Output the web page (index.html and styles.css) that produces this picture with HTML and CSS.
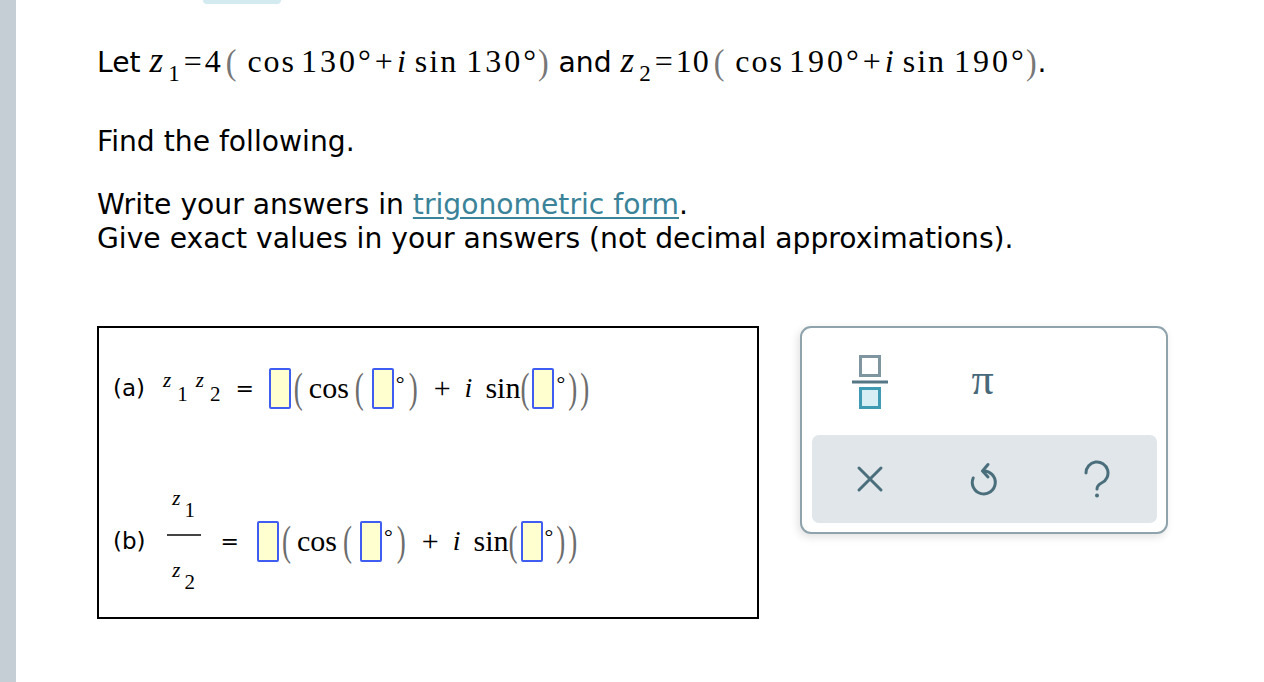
FILE: index.html
```html
<!DOCTYPE html>
<html lang="en">
<head>
<meta charset="utf-8">
<title>Complex numbers in trigonometric form</title>
<link rel="stylesheet" href="styles.css">
</head>
<body>
<div class="page">
  <aside class="rail"></aside>
  <main class="content">
    <div class="tab"></div>
    <p class="intro">Let <span class="m"><span class="mi mi-z">z</span><span class="sub">1</span><span class="mo">=</span><span class="dg dg-s">4</span><span class="gp">(</span><span class="fn">cos</span><span class="dg">130</span><span class="dgo">°</span><span class="pl">+</span><span class="mi mi-i">i</span><span class="fn sn">sin</span><span class="dg dg-t">130</span><span class="dgo">°</span><span class="gp gc">)</span></span> and <span class="m"><span class="mi mi-z">z</span><span class="sub">2</span><span class="mo">=</span><span class="dg dg-s">10</span><span class="gp">(</span><span class="fn">cos</span><span class="dg">190</span><span class="dgo">°</span><span class="pl">+</span><span class="mi mi-i">i</span><span class="fn sn">sin</span><span class="dg dg-t">190</span><span class="dgo">°</span><span class="gp gc">)</span></span>.</p>
    <p class="find">Find the following.</p>
    <p class="instr">Write your answers in <a href="#" class="link">trigonometric form</a>.<br>Give exact values in your answers (not decimal approximations).</p>

    <section class="work">
      <div class="answers">
        <div class="row row-a">
          <span class="label">(a)</span>
          <span class="prod"><span class="zv">z</span><span class="zs">1</span><span class="zv">z</span><span class="zs">2</span></span>
          <span class="eq">=</span>
          <span class="blank"></span>
          <span class="bp bp-outer">(</span>
          <span class="rf rf-cos">cos</span>
          <span class="bp bp-cos">(</span><span class="blank blank-in"></span><span class="deg">°</span><span class="bp bp-close">)</span>
          <span class="plus">+</span>
          <span class="ri">i</span>
          <span class="rf rf-sin">sin</span>
          <span class="bp">(</span><span class="blank blank-sin"></span><span class="deg">°</span><span class="bp bp-c2">)</span><span class="bp bp-c3">)</span>
        </div>
        <div class="row row-b">
          <span class="label">(b)</span>
          <span class="frac">
            <span class="num"><span class="zv">z</span><span class="zs">1</span></span>
            <span class="bar"></span>
            <span class="den"><span class="zv">z</span><span class="zs">2</span></span>
          </span>
          <span class="eq">=</span>
          <span class="blank"></span>
          <span class="bp bp-outer">(</span>
          <span class="rf rf-cos">cos</span>
          <span class="bp bp-cos">(</span><span class="blank blank-in"></span><span class="deg">°</span><span class="bp bp-close">)</span>
          <span class="plus">+</span>
          <span class="ri">i</span>
          <span class="rf rf-sin">sin</span>
          <span class="bp">(</span><span class="blank blank-sin"></span><span class="deg">°</span><span class="bp bp-c2">)</span><span class="bp bp-c3">)</span>
        </div>
      </div>

      <div class="palette">
        <div class="tools">
          <button class="key" type="button" aria-label="fraction">
            <svg width="36" height="54" viewBox="0 0 36 54">
              <rect x="8.5" y="1.5" width="19" height="19" fill="#fff" stroke="#7f959f" stroke-width="3"/>
              <line x1="0" y1="27" x2="36" y2="27" stroke="#557785" stroke-width="3"/>
              <rect x="8.5" y="33.5" width="19" height="19" fill="#d6eef4" stroke="#3f9ab3" stroke-width="3"/>
            </svg>
          </button>
          <button class="key pi" type="button">π</button>
          <span class="key"></span>
        </div>
        <div class="actions">
          <button class="key" type="button" aria-label="clear">
            <svg width="28" height="28" viewBox="0 0 28 28"><path d="M3 3 L25 25 M25 3 L3 25" stroke="#4a6e7b" stroke-width="3" stroke-linecap="round" fill="none"/></svg>
          </button>
          <button class="key" type="button" aria-label="undo">
            <svg width="32" height="36" viewBox="0 0 32 36"><path d="M14 10 A11.5 11.5 0 1 1 4.2 17" stroke="#4a6e7b" stroke-width="3" stroke-linecap="round" fill="none"/><path d="M19 3.5 L13.5 10 L19 16" stroke="#4a6e7b" stroke-width="3" stroke-linecap="round" stroke-linejoin="round" fill="none"/></svg>
          </button>
          <button class="key key-help" type="button" aria-label="help">
            <svg width="30" height="38" viewBox="0 0 30 38"><path d="M4 13 A11 11 0 1 1 19.5 23 C16.5 24.6 15 26 15 29" stroke="#4a6e7b" stroke-width="3" stroke-linecap="round" fill="none"/><circle cx="15" cy="35.5" r="2" fill="#4a6e7b"/></svg>
          </button>
        </div>
      </div>
    </section>
  </main>
</div>
</body>
</html>
```

FILE: styles.css
```css
* { box-sizing: border-box; }
html, body { margin: 0; padding: 0; background: #fff; }
body {
  font-family: "DejaVu Sans", Verdana, sans-serif;
  color: #000;
}
.page { display: flex; min-height: 682px; }
.rail { flex: none; width: 16px; background: #c4ced4; }
.content { flex: 1; padding-left: 81px; }

.tab {
  width: 78px;
  height: 4px;
  margin-left: 106px;
  background: #d3eaf1;
  border-radius: 0 0 6px 6px;
}

p { margin: 0; }
.intro {
  margin-top: 39px;
  font-size: 28.2px;
  line-height: 40px;
  height: 40px;
  white-space: nowrap;
}
.m {
  font-family: "Liberation Serif", "Times New Roman", serif;
  font-size: 32px;
  line-height: 1;
  letter-spacing: 1px;
}
.mi { font-style: italic; }
.mi-z { font-size: 35px; }
.sub {
  display: inline-block;
  font-size: 23px;
  vertical-align: -9px;
  line-height: 1;
  margin-left: 4px;
}
.mo { margin-left: 3px; }
.dg { letter-spacing: 3px; margin-left: 5px; }
.dg-s { letter-spacing: 1px; margin-left: 2px; }
.dg-t { margin-left: 8px; }
.dgo { letter-spacing: 0; }
.fn { margin-left: 10px; letter-spacing: 2px; }
.fn.sn { margin-left: 8px; }
.pl { margin-left: 4px; }
.mi-i { margin-left: 3px; }
.gp {
  display: inline-block;
  color: #777;
  transform: scaleY(1.15);
  margin-left: 4px;
}
.gp.gc { margin-left: 2px; }

.find {
  margin-top: 42px;
  font-size: 28.2px;
  line-height: 34px;
}
.instr {
  margin-top: 29px;
  font-size: 28.2px;
  line-height: 34px;
}
.link { color: #3b8399; text-decoration: underline; text-underline-offset: 3px; }

.work {
  display: flex;
  align-items: flex-start;
  gap: 41px;
  margin-top: 70px;
}

.answers {
  flex: none;
  width: 662px;
  height: 293px;
  border: 2px solid #000;
  padding: 35px 0 0 14px;
  display: flex;
  flex-direction: column;
  gap: 68px;
}
.row {
  display: flex;
  align-items: center;
  font-family: "Liberation Serif", "Times New Roman", serif;
  font-size: 27px;
  letter-spacing: 2px;
}
.row-a { height: 50px; }
.row-b { height: 120px; }
.label {
  font-family: "DejaVu Sans", Verdana, sans-serif;
  font-size: 23px;
  letter-spacing: 0;
  margin-right: 18px;
}
.prod { display: flex; align-items: flex-start; height: 40px; letter-spacing: 0; }
.zv { font-style: italic; font-size: 21px; line-height: 1; margin-top: 2px; }
.zs { font-size: 21px; line-height: 1; margin: 16px 8px 0 6px; }
.eq {
  font-family: "DejaVu Sans", Verdana, sans-serif;
  font-size: 22px;
  letter-spacing: 0;
  margin: 0 15px 0 7px;
}
.row-b .eq { margin: 0 18px 0 20px; }
.blank {
  display: inline-block;
  flex: none;
  width: 22px;
  height: 41px;
  background: #ffffcf;
  border: 2px solid #3f5df0;
  border-radius: 2px;
}
.blank-in { margin-left: 6px; }
.blank-sin { margin-left: 1px; }
.bp {
  display: inline-block;
  color: #6d6d6d;
  font-size: 27px;
  line-height: 1;
  transform: scaleY(1.55);
}
.bp-outer { margin-left: 3px; }
.bp-cos { margin-left: 6px; }
.bp-close { margin-left: 2px; }
.bp-c2 { margin-left: 1px; }
.bp-c3 { margin-left: 1px; }
.rf { font-size: 30px; letter-spacing: 0; }
.rf-cos { margin-left: 4px; }
.rf-sin { margin-left: 11px; }
.deg { font-size: 22px; margin: -8px 0 0 2px; }
.plus { font-size: 30px; margin-left: 14px; }
.ri { font-style: italic; font-size: 28px; margin-left: 12px; }

.frac {
  display: flex;
  flex-direction: column;
  align-items: center;
  width: 34px;
  margin-left: 3px;
  letter-spacing: 0;
}
.num, .den { display: flex; align-items: flex-start; height: 38px; }
.num .zs, .den .zs { margin: 14px 0 0 4px; }
.bar { display: block; width: 34px; height: 2px; background: #444; margin: 10px 0 22px; }

.palette {
  flex: none;
  width: 368px;
  height: 208px;
  border: 2px solid #8fa3ad;
  border-radius: 11px;
  background: #fff;
  box-shadow: -2px 3px 8px rgba(0, 0, 0, 0.12);
  padding: 0 9px 9px 10px;
  display: flex;
  flex-direction: column;
}
.tools {
  display: grid;
  grid-template-columns: repeat(3, 1fr);
  height: 107px;
  align-items: center;
}
.actions {
  display: grid;
  grid-template-columns: repeat(3, 1fr);
  align-items: center;
  height: 88px;
  background: #e0e6e9;
  border-radius: 7px;
}
.key {
  border: 0;
  background: none;
  padding: 0;
  display: flex;
  align-items: center;
  justify-content: center;
  color: #4e6f7b;
}
.key-help { margin-left: -6px; }
.pi {
  font-family: "Liberation Serif", "Times New Roman", serif;
  font-size: 44px;
  line-height: 1;
  color: #48697a;
  margin: -4px 0 0 -4px;
}
```
